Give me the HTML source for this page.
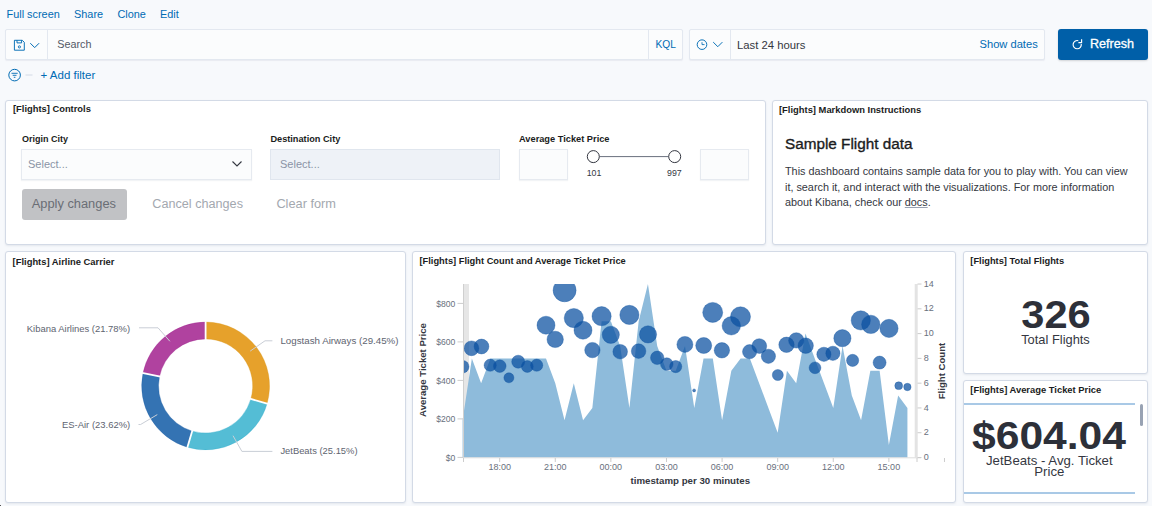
<!DOCTYPE html>
<html><head><meta charset="utf-8"><style>
html,body{margin:0;padding:0;width:1152px;height:506px;overflow:hidden;}
#root{position:absolute;left:0;top:0;width:1152px;height:506px;overflow:hidden;}
body{width:1152px;height:506px;overflow:hidden;position:relative;background:#F7F9FC;font-family:"Liberation Sans", sans-serif;}
.t{position:absolute;white-space:nowrap;line-height:1;}
</style></head><body><div id="root">
<div class="t" style="left:6.50px;top:8.77px;font-size:10.9px;font-weight:400;color:#006BB4;">Full screen</div>
<div class="t" style="left:74.00px;top:8.77px;font-size:10.9px;font-weight:400;color:#006BB4;">Share</div>
<div class="t" style="left:117.40px;top:8.77px;font-size:10.9px;font-weight:400;color:#006BB4;">Clone</div>
<div class="t" style="left:160.00px;top:8.77px;font-size:10.9px;font-weight:400;color:#006BB4;">Edit</div>
<div style="position:absolute;left:5px;top:29px;width:678px;height:31px;box-sizing:border-box;background:#FBFCFD;border:1px solid #E3E8F0;box-shadow:0 1px 1px rgba(152,162,179,.15);border-radius:2px"></div>
<div style="position:absolute;left:47px;top:30px;width:1px;height:29px;box-sizing:border-box;background:#E3E8F0"></div>
<div style="position:absolute;left:648px;top:30px;width:1px;height:29px;box-sizing:border-box;background:#E3E8F0"></div>
<svg style="position:absolute;left:12px;top:38px" width="30" height="16" viewBox="0 0 30 16">
<path d="M2.4 2.3h7.9l2 2v7.9h-9.9z" fill="none" stroke="#006BB4" stroke-width="0.95"/>
<path d="M5 2.3v2.6h4.6v-2.6" fill="none" stroke="#006BB4" stroke-width="0.95"/>
<circle cx="7.4" cy="8.9" r="1.1" fill="none" stroke="#006BB4" stroke-width="0.9"/>
<path d="M18.3 5.2l4.4 4.4 4.4-4.4" fill="none" stroke="#006BB4" stroke-width="1"/>
</svg>
<div class="t" style="left:57.30px;top:39.46px;font-size:10.8px;font-weight:400;color:#535966;">Search</div>
<div class="t" style="left:655.50px;top:39.67px;font-size:10.2px;font-weight:400;color:#006BB4;">KQL</div>
<div style="position:absolute;left:689px;top:29px;width:356px;height:31px;box-sizing:border-box;background:#FBFCFD;border:1px solid #E3E8F0;box-shadow:0 1px 1px rgba(152,162,179,.15);border-radius:2px"></div>
<div style="position:absolute;left:730px;top:30px;width:1px;height:29px;box-sizing:border-box;background:#E3E8F0"></div>
<svg style="position:absolute;left:694px;top:37px" width="32" height="16" viewBox="0 0 32 16">
<circle cx="8" cy="7.65" r="4.8" fill="none" stroke="#006BB4" stroke-width="0.95"/>
<path d="M8 5.2v2.4h2.5" fill="none" stroke="#006BB4" stroke-width="0.85"/>
<path d="M19.2 5.1l4.6 4.6 4.6-4.6" fill="none" stroke="#006BB4" stroke-width="0.95"/>
</svg>
<div class="t" style="left:737.00px;top:39.73px;font-size:11.3px;font-weight:400;color:#343741;">Last 24 hours</div>
<div class="t" style="left:979.50px;top:39.46px;font-size:11.15px;font-weight:400;color:#006BB4;">Show dates</div>
<div style="position:absolute;left:1058px;top:29px;width:90px;height:31px;box-sizing:border-box;background:#005FA8;border-radius:3px;box-shadow:0 1px 2px rgba(0,0,0,.15)"></div>
<svg style="position:absolute;left:1069px;top:36px" width="16" height="16" viewBox="0 0 16 16">
<path d="M9.3 4.7A4.1 4.1 0 1 0 12.25 8.0" fill="none" stroke="#fff" stroke-width="1.15"/>
<path d="M12.6 3.2V6.6H9.4" fill="none" stroke="#fff" stroke-width="1.15"/>

<div class="t" style="left:1090.00px;top:37.93px;font-size:12.6px;font-weight:400;color:#fff;-webkit-text-stroke:0.3px #fff">Refresh</div>
<svg style="position:absolute;left:6px;top:67px" width="30" height="16" viewBox="0 0 30 16">
<circle cx="8.6" cy="8.1" r="5.8" fill="none" stroke="#006BB4" stroke-width="1"/>
<path d="M5.5 6.3h6.2M6.7 8.3h3.8M7.8 10.3h1.6" stroke="#006BB4" stroke-width="0.9"/>
<path d="M19.5 8h7" stroke="#D3DAE6" stroke-width="1"/>
</svg>
<div class="t" style="left:40.60px;top:70.47px;font-size:11.5px;font-weight:400;color:#006BB4;">+ Add filter</div>
<div style="position:absolute;left:5px;top:100px;width:761px;height:145px;box-sizing:border-box;background:#fff;border:1px solid #D3DAE6;border-radius:3px;box-shadow:0 1px 2px rgba(152,162,179,.2)"></div>
<div style="position:absolute;left:772px;top:100px;width:376px;height:145px;box-sizing:border-box;background:#fff;border:1px solid #D3DAE6;border-radius:3px;box-shadow:0 1px 2px rgba(152,162,179,.2)"></div>
<div style="position:absolute;left:5px;top:251px;width:401px;height:252px;box-sizing:border-box;background:#fff;border:1px solid #D3DAE6;border-radius:3px;box-shadow:0 1px 2px rgba(152,162,179,.2)"></div>
<div style="position:absolute;left:412px;top:251px;width:544px;height:252px;box-sizing:border-box;background:#fff;border:1px solid #D3DAE6;border-radius:3px;box-shadow:0 1px 2px rgba(152,162,179,.2)"></div>
<div style="position:absolute;left:963px;top:251px;width:185px;height:123px;box-sizing:border-box;background:#fff;border:1px solid #D3DAE6;border-radius:3px;box-shadow:0 1px 2px rgba(152,162,179,.2)"></div>
<div style="position:absolute;left:963px;top:380px;width:185px;height:123px;box-sizing:border-box;background:#fff;border:1px solid #D3DAE6;border-radius:3px;box-shadow:0 1px 2px rgba(152,162,179,.2)"></div>
<div class="t" style="left:13.00px;top:105.49px;font-size:9.35px;font-weight:700;color:#1a1c21;">[Flights] Controls</div>
<div class="t" style="left:779.00px;top:105.44px;font-size:9.4px;font-weight:700;color:#1a1c21;">[Flights] Markdown Instructions</div>
<div class="t" style="left:12.60px;top:257.04px;font-size:9.4px;font-weight:700;color:#1a1c21;">[Flights] Airline Carrier</div>
<div class="t" style="left:419.50px;top:257.13px;font-size:9.3px;font-weight:700;color:#1a1c21;">[Flights] Flight Count and Average Ticket Price</div>
<div class="t" style="left:970.30px;top:257.03px;font-size:9.3px;font-weight:700;color:#1a1c21;">[Flights] Total Flights</div>
<div class="t" style="left:970.30px;top:385.44px;font-size:9.4px;font-weight:700;color:#1a1c21;">[Flights] Average Ticket Price</div>
<div class="t" style="left:22.00px;top:134.78px;font-size:9.0px;font-weight:700;color:#1a1c21;">Origin City</div>
<div class="t" style="left:270.40px;top:134.61px;font-size:9.2px;font-weight:700;color:#1a1c21;">Destination City</div>
<div class="t" style="left:519.00px;top:134.56px;font-size:9.26px;font-weight:700;color:#1a1c21;">Average Ticket Price</div>
<div style="position:absolute;left:21px;top:149px;width:231px;height:31px;box-sizing:border-box;background:#FBFCFD;border:1px solid #E6EAF0;box-shadow:0 1px 1px rgba(152,162,179,.12)"></div>
<div class="t" style="left:28.00px;top:158.69px;font-size:11.0px;font-weight:400;color:#8A94A6;">Select...</div>
<svg style="position:absolute;left:230px;top:158px" width="14" height="12" viewBox="0 0 14 12">
<path d="M2.5 3.5l4.5 4.5 4.5-4.5" fill="none" stroke="#343741" stroke-width="1.1"/></svg>
<div style="position:absolute;left:270px;top:149px;width:230px;height:31px;box-sizing:border-box;background:#EEF2F7;border:1px solid #E0E6EE"></div>
<div class="t" style="left:280.00px;top:158.69px;font-size:11.0px;font-weight:400;color:#8A94A6;">Select...</div>
<div style="position:absolute;left:519px;top:149px;width:49px;height:31px;box-sizing:border-box;background:#FBFCFD;border:1px solid #E6EAF0;box-shadow:0 1px 1px rgba(152,162,179,.12)"></div>
<div style="position:absolute;left:700px;top:149px;width:49px;height:31px;box-sizing:border-box;background:#FBFCFD;border:1px solid #E6EAF0;box-shadow:0 1px 1px rgba(152,162,179,.12)"></div>
<svg style="position:absolute;left:580px;top:145px" width="110" height="24" viewBox="0 0 110 24">
<path d="M19.3 11.6H88.7" stroke="#69707D" stroke-width="1"/>
<circle cx="13.3" cy="11.6" r="6" fill="#fff" stroke="#343741" stroke-width="1"/>
<circle cx="94.7" cy="11.6" r="6" fill="#fff" stroke="#343741" stroke-width="1"/>
</svg>
<div class="t" style="left:586.70px;top:169.05px;font-size:8.8px;font-weight:400;color:#343741;">101</div>
<div class="t" style="left:667.00px;top:169.05px;font-size:8.8px;font-weight:400;color:#343741;">997</div>
<div style="position:absolute;left:22px;top:189px;width:105px;height:31px;box-sizing:border-box;background:#C1C2C5;border-radius:3px"></div>
<div class="t" style="left:31.70px;top:197.92px;font-size:12.85px;font-weight:400;color:#6A6E75;">Apply changes</div>
<div class="t" style="left:152.30px;top:198.09px;font-size:12.65px;font-weight:400;color:#A3A8AF;">Cancel changes</div>
<div class="t" style="left:276.40px;top:197.99px;font-size:12.77px;font-weight:400;color:#A3A8AF;">Clear form</div>
<div class="t" style="left:785.00px;top:136.15px;font-size:15.3px;font-weight:400;color:#1a1c21;-webkit-text-stroke:0.35px #1a1c21">Sample Flight data</div>
<div class="t" style="left:785.00px;top:165.53px;font-size:10.83px;font-weight:400;color:#343741;">This dashboard contains sample data for you to play with. You can view</div>
<div class="t" style="left:785.00px;top:181.53px;font-size:10.83px;font-weight:400;color:#343741;">it, search it, and interact with the visualizations. For more information</div>
<div class="t" style="left:785.00px;top:197.03px;font-size:10.83px;font-weight:400;color:#343741;">about Kibana, check our <span style="text-decoration:underline;text-decoration-color:#98A2B3">docs</span>.</div>
<svg style="position:absolute;left:0;top:0" width="1152" height="506">
<path d="M205.60 322.10A63.9 63.9 0 0 1 267.02 403.63L250.87 399.00A47.1 47.1 0 0 0 205.60 338.90Z" fill="#E6A12B" stroke="#D9920F" stroke-width="0.6" stroke-opacity="0.6"/>
<path d="M267.02 403.63A63.9 63.9 0 0 1 187.39 447.25L192.18 431.15A47.1 47.1 0 0 0 250.87 399.00Z" fill="#54BDD5" stroke="#2FAACB" stroke-width="0.6" stroke-opacity="0.6"/>
<path d="M187.39 447.25A63.9 63.9 0 0 1 143.00 373.16L159.46 376.54A47.1 47.1 0 0 0 192.18 431.15Z" fill="#3473B3" stroke="#1F5FA6" stroke-width="0.6" stroke-opacity="0.6"/>
<path d="M143.00 373.16A63.9 63.9 0 0 1 205.60 322.10L205.60 338.90A47.1 47.1 0 0 0 159.46 376.54Z" fill="#B0429F" stroke="#9E1E8D" stroke-width="0.6" stroke-opacity="0.6"/>
<path d="M205.60 339.90L205.60 321.10" stroke="#fff" stroke-width="1.8"/>
<path d="M249.91 398.72L267.98 403.91" stroke="#fff" stroke-width="1.8"/>
<path d="M192.46 430.19L187.10 448.21" stroke="#fff" stroke-width="1.8"/>
<path d="M160.44 376.74L142.02 372.96" stroke="#fff" stroke-width="1.8"/>
<path d="M139 327.8H158L169.9 341.3" fill="none" stroke="#C9CED6" stroke-width="1"/>
<path d="M250.2 351.1L265 340.8H272.4" fill="none" stroke="#C9CED6" stroke-width="1"/>
<path d="M233 435.7L241.9 451.4H272.4" fill="none" stroke="#C9CED6" stroke-width="1"/>
<path d="M157.3 414.6L140.6 424.5H138.5" fill="none" stroke="#C9CED6" stroke-width="1"/>
<defs><clipPath id="pc"><rect x="463" y="284" width="454" height="174"/></clipPath></defs>
<rect x="463" y="284" width="6" height="173.5" fill="#E6E6E6"/>
<polygon points="462.60,457.5 462.60,420.33 471.87,358.38 481.13,383.16 490.40,358.38 499.67,358.38 508.94,358.38 518.20,358.38 527.47,358.38 536.74,358.38 546.00,358.38 555.27,383.16 564.54,420.33 573.80,383.16 583.07,420.33 592.34,407.94 601.61,321.21 610.87,321.21 620.14,345.99 629.41,407.94 638.67,321.21 647.94,284.04 657.21,345.99 666.47,370.77 675.74,370.77 685.01,345.99 694.27,407.94 703.54,358.38 712.81,358.38 722.08,420.33 731.34,370.77 740.61,358.38 749.88,358.38 759.14,383.16 768.41,407.94 777.68,432.72 786.94,370.77 796.21,383.16 805.48,333.60 814.75,358.38 824.01,383.16 833.28,407.94 842.55,345.99 851.81,395.55 861.08,420.33 870.35,370.77 879.62,370.77 888.88,445.11 898.15,395.55 907.42,407.94 907.42,457.5" fill="#8EBBDB"/>
<g clip-path="url(#pc)">
<circle cx="462.7" cy="366.7" r="6.3" fill="#0A50A1" fill-opacity="0.73" stroke="#0A50A1" stroke-opacity="0.45" stroke-width="0.8"/>
<circle cx="471.5" cy="348.3" r="7.4" fill="#0A50A1" fill-opacity="0.73" stroke="#0A50A1" stroke-opacity="0.45" stroke-width="0.8"/>
<circle cx="481.5" cy="346.5" r="7.4" fill="#0A50A1" fill-opacity="0.73" stroke="#0A50A1" stroke-opacity="0.45" stroke-width="0.8"/>
<circle cx="490.2" cy="365.2" r="6.1" fill="#0A50A1" fill-opacity="0.73" stroke="#0A50A1" stroke-opacity="0.45" stroke-width="0.8"/>
<circle cx="499.8" cy="366.1" r="6.3" fill="#0A50A1" fill-opacity="0.73" stroke="#0A50A1" stroke-opacity="0.45" stroke-width="0.8"/>
<circle cx="508.9" cy="377.8" r="5" fill="#0A50A1" fill-opacity="0.73" stroke="#0A50A1" stroke-opacity="0.45" stroke-width="0.8"/>
<circle cx="518.2" cy="361.7" r="6.5" fill="#0A50A1" fill-opacity="0.73" stroke="#0A50A1" stroke-opacity="0.45" stroke-width="0.8"/>
<circle cx="527.3" cy="366.5" r="5.9" fill="#0A50A1" fill-opacity="0.73" stroke="#0A50A1" stroke-opacity="0.45" stroke-width="0.8"/>
<circle cx="536.7" cy="365.2" r="6.1" fill="#0A50A1" fill-opacity="0.73" stroke="#0A50A1" stroke-opacity="0.45" stroke-width="0.8"/>
<circle cx="546" cy="325.2" r="9" fill="#0A50A1" fill-opacity="0.73" stroke="#0A50A1" stroke-opacity="0.45" stroke-width="0.8"/>
<circle cx="555.2" cy="339.4" r="8.2" fill="#0A50A1" fill-opacity="0.73" stroke="#0A50A1" stroke-opacity="0.45" stroke-width="0.8"/>
<circle cx="564.6" cy="290.3" r="11.5" fill="#0A50A1" fill-opacity="0.73" stroke="#0A50A1" stroke-opacity="0.45" stroke-width="0.8"/>
<circle cx="573.8" cy="318.1" r="9.6" fill="#0A50A1" fill-opacity="0.73" stroke="#0A50A1" stroke-opacity="0.45" stroke-width="0.8"/>
<circle cx="583" cy="330.2" r="9" fill="#0A50A1" fill-opacity="0.73" stroke="#0A50A1" stroke-opacity="0.45" stroke-width="0.8"/>
<circle cx="592.4" cy="350.1" r="7.7" fill="#0A50A1" fill-opacity="0.73" stroke="#0A50A1" stroke-opacity="0.45" stroke-width="0.8"/>
<circle cx="601.6" cy="316.2" r="9.6" fill="#0A50A1" fill-opacity="0.73" stroke="#0A50A1" stroke-opacity="0.45" stroke-width="0.8"/>
<circle cx="610.8" cy="334.8" r="8.6" fill="#0A50A1" fill-opacity="0.73" stroke="#0A50A1" stroke-opacity="0.45" stroke-width="0.8"/>
<circle cx="620.2" cy="351.7" r="7.3" fill="#0A50A1" fill-opacity="0.73" stroke="#0A50A1" stroke-opacity="0.45" stroke-width="0.8"/>
<circle cx="629.4" cy="314.9" r="9.6" fill="#0A50A1" fill-opacity="0.73" stroke="#0A50A1" stroke-opacity="0.45" stroke-width="0.8"/>
<circle cx="638.6" cy="351.1" r="7.3" fill="#0A50A1" fill-opacity="0.73" stroke="#0A50A1" stroke-opacity="0.45" stroke-width="0.8"/>
<circle cx="648" cy="334.4" r="8.6" fill="#0A50A1" fill-opacity="0.73" stroke="#0A50A1" stroke-opacity="0.45" stroke-width="0.8"/>
<circle cx="657.2" cy="357.8" r="6.7" fill="#0A50A1" fill-opacity="0.73" stroke="#0A50A1" stroke-opacity="0.45" stroke-width="0.8"/>
<circle cx="666.8" cy="364.1" r="6.3" fill="#0A50A1" fill-opacity="0.73" stroke="#0A50A1" stroke-opacity="0.45" stroke-width="0.8"/>
<circle cx="675.7" cy="366.6" r="6.1" fill="#0A50A1" fill-opacity="0.73" stroke="#0A50A1" stroke-opacity="0.45" stroke-width="0.8"/>
<circle cx="684.9" cy="344.4" r="8" fill="#0A50A1" fill-opacity="0.73" stroke="#0A50A1" stroke-opacity="0.45" stroke-width="0.8"/>
<circle cx="694.1" cy="390.4" r="1.5" fill="#0A50A1" fill-opacity="0.73" stroke="#0A50A1" stroke-opacity="0.45" stroke-width="0.8"/>
<circle cx="703.7" cy="345.5" r="8" fill="#0A50A1" fill-opacity="0.73" stroke="#0A50A1" stroke-opacity="0.45" stroke-width="0.8"/>
<circle cx="712.7" cy="312.4" r="10" fill="#0A50A1" fill-opacity="0.73" stroke="#0A50A1" stroke-opacity="0.45" stroke-width="0.8"/>
<circle cx="721.9" cy="350.3" r="7.7" fill="#0A50A1" fill-opacity="0.73" stroke="#0A50A1" stroke-opacity="0.45" stroke-width="0.8"/>
<circle cx="731.3" cy="325.8" r="9.2" fill="#0A50A1" fill-opacity="0.73" stroke="#0A50A1" stroke-opacity="0.45" stroke-width="0.8"/>
<circle cx="740.5" cy="316.8" r="10" fill="#0A50A1" fill-opacity="0.73" stroke="#0A50A1" stroke-opacity="0.45" stroke-width="0.8"/>
<circle cx="749.6" cy="351.7" r="7.1" fill="#0A50A1" fill-opacity="0.73" stroke="#0A50A1" stroke-opacity="0.45" stroke-width="0.8"/>
<circle cx="759.3" cy="346.1" r="7.4" fill="#0A50A1" fill-opacity="0.73" stroke="#0A50A1" stroke-opacity="0.45" stroke-width="0.8"/>
<circle cx="768.4" cy="356.3" r="7.1" fill="#0A50A1" fill-opacity="0.73" stroke="#0A50A1" stroke-opacity="0.45" stroke-width="0.8"/>
<circle cx="777.8" cy="375" r="5.5" fill="#0A50A1" fill-opacity="0.73" stroke="#0A50A1" stroke-opacity="0.45" stroke-width="0.8"/>
<circle cx="786.5" cy="344.8" r="7.7" fill="#0A50A1" fill-opacity="0.73" stroke="#0A50A1" stroke-opacity="0.45" stroke-width="0.8"/>
<circle cx="796.3" cy="340.4" r="7.7" fill="#0A50A1" fill-opacity="0.73" stroke="#0A50A1" stroke-opacity="0.45" stroke-width="0.8"/>
<circle cx="805.7" cy="345.7" r="7.7" fill="#0A50A1" fill-opacity="0.73" stroke="#0A50A1" stroke-opacity="0.45" stroke-width="0.8"/>
<circle cx="815" cy="367.8" r="5.9" fill="#0A50A1" fill-opacity="0.73" stroke="#0A50A1" stroke-opacity="0.45" stroke-width="0.8"/>
<circle cx="823.9" cy="354.3" r="7.1" fill="#0A50A1" fill-opacity="0.73" stroke="#0A50A1" stroke-opacity="0.45" stroke-width="0.8"/>
<circle cx="832.9" cy="353.3" r="7.1" fill="#0A50A1" fill-opacity="0.73" stroke="#0A50A1" stroke-opacity="0.45" stroke-width="0.8"/>
<circle cx="842.4" cy="338.2" r="8.6" fill="#0A50A1" fill-opacity="0.73" stroke="#0A50A1" stroke-opacity="0.45" stroke-width="0.8"/>
<circle cx="852.6" cy="360.4" r="6.1" fill="#0A50A1" fill-opacity="0.73" stroke="#0A50A1" stroke-opacity="0.45" stroke-width="0.8"/>
<circle cx="860.8" cy="320.4" r="9.6" fill="#0A50A1" fill-opacity="0.73" stroke="#0A50A1" stroke-opacity="0.45" stroke-width="0.8"/>
<circle cx="870.8" cy="324.4" r="9.2" fill="#0A50A1" fill-opacity="0.73" stroke="#0A50A1" stroke-opacity="0.45" stroke-width="0.8"/>
<circle cx="879.6" cy="362.6" r="6.5" fill="#0A50A1" fill-opacity="0.73" stroke="#0A50A1" stroke-opacity="0.45" stroke-width="0.8"/>
<circle cx="889" cy="328.4" r="9.1" fill="#0A50A1" fill-opacity="0.73" stroke="#0A50A1" stroke-opacity="0.45" stroke-width="0.8"/>
<circle cx="898.7" cy="385.7" r="3.9" fill="#0A50A1" fill-opacity="0.73" stroke="#0A50A1" stroke-opacity="0.45" stroke-width="0.8"/>
<circle cx="907.4" cy="387" r="3.7" fill="#0A50A1" fill-opacity="0.73" stroke="#0A50A1" stroke-opacity="0.45" stroke-width="0.8"/>
</g>
<path d="M463.5 284V457.5" stroke="#CFCFCF" stroke-width="1"/>
<path d="M916.2 284V457.5" stroke="#E3E3E3" stroke-width="3"/>
<path d="M463 457.8H921" stroke="#DDDDDD" stroke-width="1"/>
<path d="M457.5 457.40H463" stroke="#CCCCCC" stroke-width="1"/>
<path d="M457.5 418.90H463" stroke="#CCCCCC" stroke-width="1"/>
<path d="M457.5 380.40H463" stroke="#CCCCCC" stroke-width="1"/>
<path d="M457.5 341.90H463" stroke="#CCCCCC" stroke-width="1"/>
<path d="M457.5 303.40H463" stroke="#CCCCCC" stroke-width="1"/>
<path d="M917.5 457.50H921.5" stroke="#CCCCCC" stroke-width="1"/>
<path d="M917.5 432.72H921.5" stroke="#CCCCCC" stroke-width="1"/>
<path d="M917.5 407.94H921.5" stroke="#CCCCCC" stroke-width="1"/>
<path d="M917.5 383.16H921.5" stroke="#CCCCCC" stroke-width="1"/>
<path d="M917.5 358.38H921.5" stroke="#CCCCCC" stroke-width="1"/>
<path d="M917.5 333.60H921.5" stroke="#CCCCCC" stroke-width="1"/>
<path d="M917.5 308.82H921.5" stroke="#CCCCCC" stroke-width="1"/>
<path d="M917.5 284.04H921.5" stroke="#CCCCCC" stroke-width="1"/>
<path d="M499.67 458V462" stroke="#CCCCCC" stroke-width="1"/>
<path d="M555.27 458V462" stroke="#CCCCCC" stroke-width="1"/>
<path d="M610.87 458V462" stroke="#CCCCCC" stroke-width="1"/>
<path d="M666.47 458V462" stroke="#CCCCCC" stroke-width="1"/>
<path d="M722.08 458V462" stroke="#CCCCCC" stroke-width="1"/>
<path d="M777.68 458V462" stroke="#CCCCCC" stroke-width="1"/>
<path d="M833.28 458V462" stroke="#CCCCCC" stroke-width="1"/>
<path d="M888.88 458V462" stroke="#CCCCCC" stroke-width="1"/>
<path d="M944.48 458V462" stroke="#CCCCCC" stroke-width="1"/>
<path d="M463.5 458V462M917 458V462" stroke="#CCCCCC" stroke-width="1"/>
</svg>
<div class="t" style="left:26.80px;top:323.90px;font-size:9.45px;font-weight:400;color:#5E6470;">Kibana Airlines (21.78%)</div>
<div class="t" style="left:280.40px;top:336.05px;font-size:9.75px;font-weight:400;color:#5E6470;">Logstash Airways (29.45%)</div>
<div class="t" style="left:280.40px;top:446.34px;font-size:9.4px;font-weight:400;color:#5E6470;">JetBeats (25.15%)</div>
<div class="t" style="left:62.00px;top:419.90px;font-size:9.45px;font-weight:400;color:#5E6470;">ES-Air (23.62%)</div>
<div class="t" style="left:155.30px;width:300px;text-align:right;top:453.62px;font-size:8.6px;font-weight:400;color:#69707D;">$0</div>
<div class="t" style="left:155.30px;width:300px;text-align:right;top:415.12px;font-size:8.6px;font-weight:400;color:#69707D;">$200</div>
<div class="t" style="left:155.30px;width:300px;text-align:right;top:376.62px;font-size:8.6px;font-weight:400;color:#69707D;">$400</div>
<div class="t" style="left:155.30px;width:300px;text-align:right;top:338.12px;font-size:8.6px;font-weight:400;color:#69707D;">$600</div>
<div class="t" style="left:155.30px;width:300px;text-align:right;top:299.62px;font-size:8.6px;font-weight:400;color:#69707D;">$800</div>
<div class="t" style="left:923.80px;top:453.08px;font-size:9.0px;font-weight:400;color:#69707D;">0</div>
<div class="t" style="left:923.80px;top:428.30px;font-size:9.0px;font-weight:400;color:#69707D;">2</div>
<div class="t" style="left:923.80px;top:403.52px;font-size:9.0px;font-weight:400;color:#69707D;">4</div>
<div class="t" style="left:923.80px;top:378.74px;font-size:9.0px;font-weight:400;color:#69707D;">6</div>
<div class="t" style="left:923.80px;top:353.96px;font-size:9.0px;font-weight:400;color:#69707D;">8</div>
<div class="t" style="left:923.80px;top:329.18px;font-size:9.0px;font-weight:400;color:#69707D;">10</div>
<div class="t" style="left:923.80px;top:304.40px;font-size:9.0px;font-weight:400;color:#69707D;">12</div>
<div class="t" style="left:923.80px;top:279.62px;font-size:9.0px;font-weight:400;color:#69707D;">14</div>
<div class="t" style="left:199.67px;width:600px;text-align:center;top:463.38px;font-size:9.0px;font-weight:400;color:#69707D;">18:00</div>
<div class="t" style="left:255.27px;width:600px;text-align:center;top:463.38px;font-size:9.0px;font-weight:400;color:#69707D;">21:00</div>
<div class="t" style="left:310.87px;width:600px;text-align:center;top:463.38px;font-size:9.0px;font-weight:400;color:#69707D;">00:00</div>
<div class="t" style="left:366.47px;width:600px;text-align:center;top:463.38px;font-size:9.0px;font-weight:400;color:#69707D;">03:00</div>
<div class="t" style="left:422.08px;width:600px;text-align:center;top:463.38px;font-size:9.0px;font-weight:400;color:#69707D;">06:00</div>
<div class="t" style="left:477.68px;width:600px;text-align:center;top:463.38px;font-size:9.0px;font-weight:400;color:#69707D;">09:00</div>
<div class="t" style="left:533.28px;width:600px;text-align:center;top:463.38px;font-size:9.0px;font-weight:400;color:#69707D;">12:00</div>
<div class="t" style="left:588.88px;width:600px;text-align:center;top:463.38px;font-size:9.0px;font-weight:400;color:#69707D;">15:00</div>
<div class="t" style="left:630.50px;top:475.59px;font-size:9.7px;font-weight:700;color:#343741;">timestamp per 30 minutes</div>
<div class="t" style="left:363px;top:363.5px;width:120px;text-align:center;font-size:9.6px;line-height:12px;font-weight:700;color:#343741;transform:rotate(-90deg)">Average Ticket Price</div>
<div class="t" style="left:882px;top:364.6px;width:120px;text-align:center;font-size:9.6px;line-height:12px;font-weight:700;color:#343741;transform:rotate(-90deg)">Flight Count</div>
<div class="t" style="left:755.90px;width:600px;text-align:center;top:296.23px;font-size:38px;font-weight:700;color:#2D3039;transform:scaleX(1.095)">326</div>
<div class="t" style="left:755.50px;width:600px;text-align:center;top:333.61px;font-size:12.86px;font-weight:400;color:#343741;">Total Flights</div>
<div style="position:absolute;left:964px;top:403px;width:171px;height:2px;box-sizing:border-box;background:#A9C9E6"></div>
<div style="position:absolute;left:964px;top:492px;width:171px;height:2px;box-sizing:border-box;background:#A9C9E6"></div>
<div style="position:absolute;left:1140px;top:404px;width:3px;height:22px;box-sizing:border-box;background:#98A2B3;border-radius:2px"></div>
<div class="t" style="left:748.60px;width:600px;text-align:center;top:415.86px;font-size:39.5px;font-weight:700;color:#2D3039;transform:scaleX(1.078)">$604.04</div>
<div class="t" style="left:749.30px;width:600px;text-align:center;top:453.63px;font-size:13.2px;font-weight:400;color:#343741;">JetBeats - Avg. Ticket</div>
<div class="t" style="left:749.30px;width:600px;text-align:center;top:465.23px;font-size:13.2px;font-weight:400;color:#343741;">Price</div>
<div style="position:absolute;left:0px;top:505px;width:1px;height:1px;box-sizing:border-box;background:#555"></div>
</div></body></html>
